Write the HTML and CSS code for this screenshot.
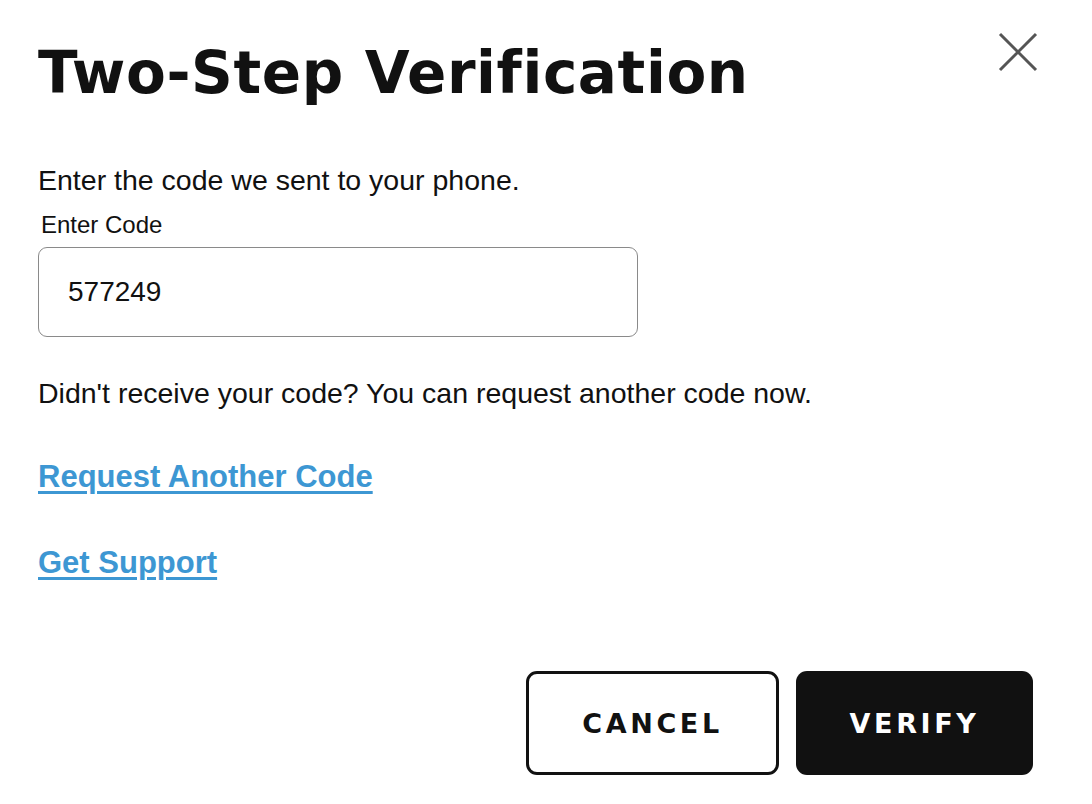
FILE: index.html
```html
<!DOCTYPE html>
<html>
<head>
<meta charset="utf-8">
<link rel="stylesheet" href="styles.css">
</head>
<body>
<div class="modal">
  <div class="header">
    <h1 class="title">Two-Step Verification</h1>
    <button class="close" aria-label="Close">
      <svg width="42" height="42" viewBox="0 0 42 42"><path d="M3 3 L39 39 M39 3 L3 39" stroke="#555" stroke-width="3" fill="none"/></svg>
    </button>
  </div>
  <p class="intro">Enter the code we sent to your phone.</p>
  <label class="label">Enter Code</label>
  <div class="input">577249</div>
  <p class="resend">Didn't receive your code? You can request another code now.</p>
  <a class="link first" href="#">Request Another Code</a>
  <a class="link" href="#">Get Support</a>
  <div class="actions">
    <button class="btn cancel">CANCEL</button>
    <button class="btn verify">VERIFY</button>
  </div>
</div>
</body>
</html>
```
FILE: styles.css
```css
html, body { margin: 0; padding: 0; background: #fff; }
body { font-family: "Liberation Sans", Arial, sans-serif; color: #111; }
.modal { padding: 30px 58px 30px 38px; display: flex; flex-direction: column; align-items: flex-start; }
.header { display: flex; justify-content: space-between; align-items: flex-start; width: 100%; }
.title { margin: 8px 0 0 0; font-family: "DejaVu Sans", sans-serif; font-weight: bold; font-size: 58px; line-height: 70px; letter-spacing: 0.6px; }
.close { background: none; border: 0; padding: 0; margin: 1px -5px 0 0; cursor: pointer; }
.close svg { display: block; }
.intro { margin: 56px 0 0 0; font-size: 28.5px; line-height: 32px; }
.label { margin: 15px 0 0 3px; font-size: 24px; line-height: 28px; }
.input { margin-top: 8px; box-sizing: border-box; width: 600px; height: 90px; border: 1.5px solid #8a8a8a; border-radius: 9px; padding: 0 29px; display: flex; align-items: center; font-size: 28px; }
.resend { margin: 40px 0 0 0; font-size: 28.5px; line-height: 32px; }
.link { color: #3d97d3; font-weight: bold; font-size: 31px; line-height: 36px; text-decoration: underline; text-decoration-thickness: 3px; text-underline-offset: 4px; margin-top: 50px; }
.link.first { margin-top: 50px; }
.actions { align-self: flex-end; display: flex; gap: 17px; margin-top: 90px; margin-right: 1px; }
.btn { box-sizing: border-box; height: 104px; border-radius: 11px; font-family: "DejaVu Sans", sans-serif; font-weight: bold; font-size: 27px; letter-spacing: 3.6px; cursor: pointer; }
.cancel { width: 253px; background: #fff; border: 3px solid #111; color: #111; }
.verify { width: 237px; background: #111; border: 0; color: #fff; }
```
